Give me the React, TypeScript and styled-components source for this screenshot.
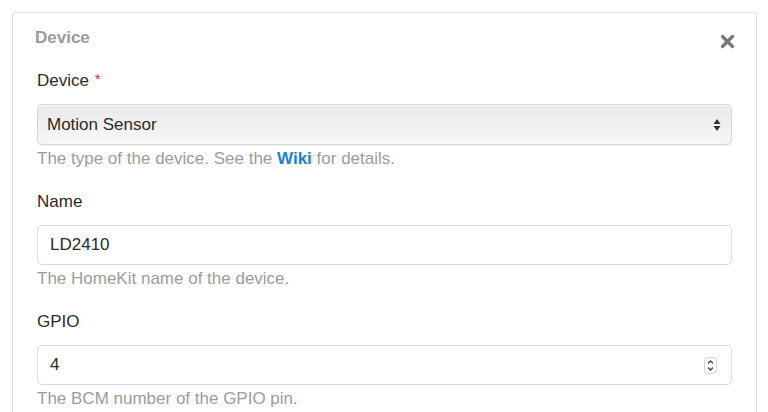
import styled, { createGlobalStyle } from "styled-components";

const GlobalStyle = createGlobalStyle`
  html, body {
    margin: 0;
    padding: 0;
    background: #ffffff;
  }
  body {
    font-family: "Liberation Sans", Arial, sans-serif;
    color: #333333;
  }
`;

const Page = styled.div`
  padding: 12px 11px 0 12px;
  height: 412px;
  box-sizing: border-box;
  overflow: hidden;
`;

const Panel = styled.section`
  border: 1px solid #e0e0e0;
  border-bottom: none;
  border-radius: 4px 4px 0 0;
  padding: 13px 23px 40px 22px;
  min-height: 420px;
  box-sizing: border-box;
`;

const PanelHeader = styled.div`
  display: flex;
  justify-content: space-between;
  align-items: flex-start;
`;

const PanelTitle = styled.h3`
  margin: 0;
  font-size: 17px;
  line-height: 24px;
  font-weight: bold;
  color: #9a9a9a;
`;

const CloseButton = styled.button`
  border: none;
  background: none;
  padding: 0;
  margin: 4px -5px 0 0;
  width: 22px;
  height: 22px;
  display: flex;
  align-items: center;
  justify-content: center;
  cursor: pointer;
`;

const Body = styled.div`
  padding: 0 1px 0 2px;
`;

const Field = styled.div<{ $first?: boolean }>`
  margin-top: ${(p) => (p.$first ? "17px" : "19px")};
`;

const Label = styled.label`
  display: block;
  font-size: 17px;
  line-height: 24px;
  color: #2b2b2b;
  margin-bottom: 11px;
`;

const Required = styled.span`
  color: #d9302c;
  font-size: 15px;
  line-height: 0;
  margin-left: 1px;
  vertical-align: 2px;
`;

const SelectBox = styled.div`
  height: 41px;
  box-sizing: border-box;
  border: 1px solid #d6d6d6;
  border-radius: 5px;
  background: linear-gradient(#e9e9e9, #f7f7f7);
  box-shadow: inset 0 1px 1px rgba(255, 255, 255, 0.7), 0 1px 1px rgba(0, 0, 0, 0.06);
  display: flex;
  align-items: center;
  padding: 0 10px 0 9px;
  font-size: 17px;
  color: #2b2b2b;
`;

const SelectValue = styled.span`
  flex: 1;
`;

const TextInput = styled.div`
  height: 40px;
  box-sizing: border-box;
  border: 1px solid #dcdcdc;
  border-radius: 5px;
  background: #ffffff;
  display: flex;
  align-items: center;
  padding: 0 14px 0 12px;
  font-size: 17px;
  color: #2b2b2b;
`;

const Help = styled.p`
  margin: 2px 0 0 0;
  font-size: 17px;
  line-height: 24px;
  color: #9c9c9c;
`;

const HelpLink = styled.a`
  color: #1b7fd6;
  font-weight: bold;
  text-decoration: none;
`;

function CloseIcon() {
  return (
    <svg width="15" height="15" viewBox="0 0 15 15">
      <path d="M2.5 2.5 L12.5 12.5 M12.5 2.5 L2.5 12.5" stroke="#777" strokeWidth="3.2" strokeLinecap="round" />
    </svg>
  );
}

function SelectArrows() {
  return (
    <svg width="8" height="14" viewBox="0 0 8 14">
      <path d="M4 1 L7.5 6 L0.5 6 Z" fill="#333" />
      <path d="M4 13 L7.5 8 L0.5 8 Z" fill="#333" />
    </svg>
  );
}

function Spinner() {
  return (
    <svg width="13" height="17" viewBox="0 0 13 17">
      <rect x="0.5" y="0.5" width="12" height="16" rx="3.5" fill="#fff" stroke="#d4d4d4" />
      <path d="M4 6.5 L6.5 4 L9 6.5" fill="none" stroke="#444" strokeWidth="1.4" />
      <path d="M4 10.5 L6.5 13 L9 10.5" fill="none" stroke="#444" strokeWidth="1.4" />
    </svg>
  );
}

export default function App() {
  return (
    <>
      <GlobalStyle />
      <Page>
        <Panel>
          <PanelHeader>
            <PanelTitle>Device</PanelTitle>
            <CloseButton aria-label="Close">
              <CloseIcon />
            </CloseButton>
          </PanelHeader>
          <Body>
            <Field $first>
              <Label>
                Device <Required>*</Required>
              </Label>
              <SelectBox>
                <SelectValue>Motion Sensor</SelectValue>
                <SelectArrows />
              </SelectBox>
              <Help>
                The type of the device. See the <HelpLink href="#">Wiki</HelpLink> for details.
              </Help>
            </Field>
            <Field>
              <Label>Name</Label>
              <TextInput>LD2410</TextInput>
              <Help>The HomeKit name of the device.</Help>
            </Field>
            <Field>
              <Label>GPIO</Label>
              <TextInput>
                <SelectValue>4</SelectValue>
                <Spinner />
              </TextInput>
              <Help>The BCM number of the GPIO pin.</Help>
            </Field>
          </Body>
        </Panel>
      </Page>
    </>
  );
}
